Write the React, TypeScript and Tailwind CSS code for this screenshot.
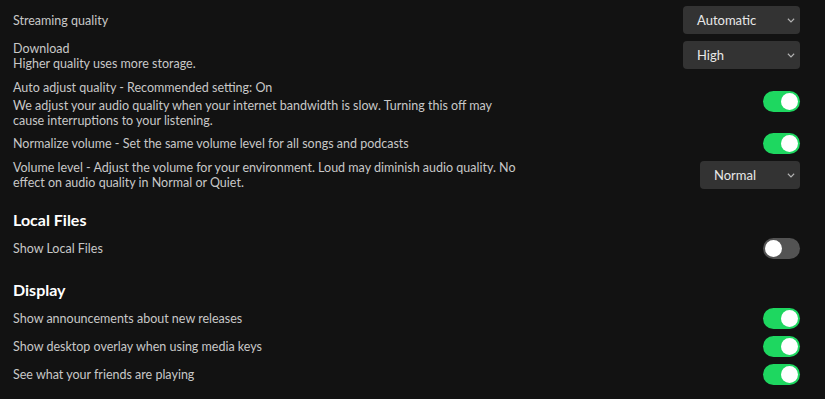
import React from 'react'

function Toggle({ on, className = '' }: { on: boolean; className?: string }) {
  return (
    <div
      className={
        'flex h-[21px] w-[37px] shrink-0 items-center rounded-full px-[2px] ' +
        (on ? 'justify-end bg-[#1ed760] ' : 'justify-start bg-[#535353] ') +
        className
      }
    >
      <div className="h-[17px] w-[17px] rounded-full bg-white" />
    </div>
  )
}

function Select({ value, width }: { value: string; width: string }) {
  return (
    <div
      className={
        'flex h-[28px] shrink-0 items-center justify-between rounded bg-[#333333] pl-[14px] pr-[4px] text-[13px] text-[#e8e8e8] ' +
        width
      }
    >
      <span>{value}</span>
      <svg width="10" height="10" viewBox="0 0 16 16" fill="none" stroke="#b3b3b3" strokeWidth="1.8">
        <path d="M3 6l5 5 5-5" />
      </svg>
    </div>
  )
}

export default function App() {
  return (
    <div
      className="h-[399px] w-[825px] overflow-hidden bg-[#121212] pl-[13px] pr-[25px] pt-[6px] text-[12.5px] leading-[15px] text-[#c8c8c8]"
      style={{ fontFamily: 'Lato, sans-serif' }}
    >
      {/* Audio quality */}
      <div className="flex h-[27px] items-center justify-between pt-[1px]">
        <span>Streaming quality</span>
        <Select value="Automatic" width="w-[117px]" />
      </div>

      <div className="mt-[8px] flex h-[28px] items-center justify-between">
        <div className="pt-[1px]">
          <div>Download</div>
          <div>Higher quality uses more storage.</div>
        </div>
        <Select value="High" width="w-[117px]" />
      </div>

      <div className="mt-[11px] flex items-center justify-between">
        <div className="max-w-[490px]">
          <div>Auto adjust quality - Recommended setting: On</div>
          <div className="mt-[3px]">
            We adjust your audio quality when your internet bandwidth is slow. Turning this off may cause
            interruptions to your listening.
          </div>
        </div>
        <Toggle on className="mb-[6px]" />
      </div>

      <div className="mt-[5px] flex h-[21px] items-center justify-between">
        <span>Normalize volume - Set the same volume level for all songs and podcasts</span>
        <Toggle on />
      </div>

      <div className="mt-[7px] flex h-[28px] items-center justify-between">
        <div className="max-w-[515px]">
          Volume level - Adjust the volume for your environment. Loud may diminish audio quality. No effect on
          audio quality in Normal or Quiet.
        </div>
        <Select value="Normal" width="w-[100px]" />
      </div>

      {/* Local Files */}
      <h2 className="mt-[21px] text-[16px] font-bold leading-[20px] text-white">Local Files</h2>
      <div className="mt-[8px] flex h-[21px] items-center justify-between">
        <span>Show Local Files</span>
        <Toggle on={false} />
      </div>

      {/* Display */}
      <h2 className="mt-[21px] text-[16px] font-bold leading-[20px] text-white">Display</h2>
      <div className="mt-[8px] flex flex-col gap-[7px]">
        {[
          'Show announcements about new releases',
          'Show desktop overlay when using media keys',
          'See what your friends are playing',
        ].map((label) => (
          <div key={label} className="flex h-[21px] items-center justify-between">
            <span>{label}</span>
            <Toggle on />
          </div>
        ))}
      </div>
    </div>
  )
}
